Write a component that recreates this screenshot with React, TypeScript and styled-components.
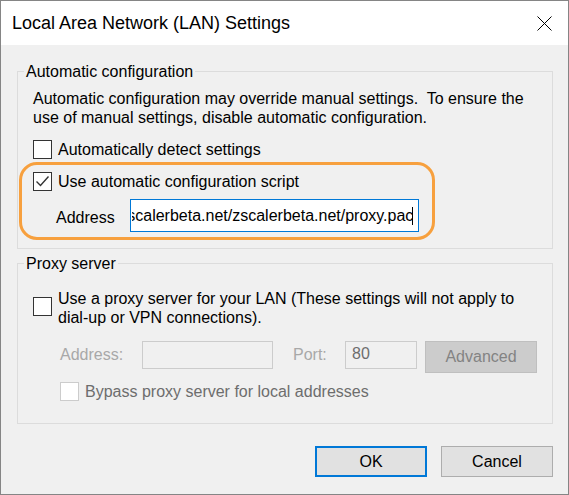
import { useEffect, useRef } from 'react';
import styled, { createGlobalStyle } from 'styled-components';

const GlobalStyle = createGlobalStyle`
  html, body {
    margin: 0;
    padding: 0;
    background: #f0f0f0;
  }

  body {
    font-family: "Segoe UI", "Liberation Sans", Arial, sans-serif;
    font-size: 16px;
    color: #000;
  }

  * {
    box-sizing: border-box;
  }
`;

const Window = styled.div`
  width: 569px;
  height: 495px;
  border: 1px solid #858585;
  background-color: #f0f0f0;
  display: flex;
  flex-direction: column;
`;

const TitleBar = styled.div`
  height: 44px;
  flex-shrink: 0;
  background-color: #fff;
  display: flex;
  align-items: center;
  justify-content: space-between;
  padding: 0 16px 0 11px;
`;

const Title = styled.span`
  font-size: 18px;
`;

const CloseIcon = styled.svg`
  width: 15px;
  height: 15px;
  display: block;
`;

const Content = styled.div`
  display: flex;
  flex-direction: column;
  padding: 0 15px 0 16px;
`;

const GroupBox = styled.section<{ $height: number; $gap: number }>`
  position: relative;
  height: ${(p) => p.$height}px;
  margin-top: ${(p) => p.$gap}px;
  border: 1px solid #dcdcdc;
  display: flex;
  flex-direction: column;
  align-items: flex-start;
`;

const GroupTitle = styled.span`
  position: absolute;
  top: -10px;
  left: 6px;
  padding: 0 2px;
  line-height: 19px;
  background-color: #f0f0f0;
`;

const Description = styled.p`
  margin: 17px 0 0 15px;
  line-height: 19px;
`;

const CheckRow = styled.label<{ $top: number; $left: number; $disabled?: boolean }>`
  display: flex;
  align-items: flex-start;
  gap: 6px;
  margin: ${(p) => p.$top}px 0 0 ${(p) => p.$left}px;
  line-height: 19px;
  color: ${(p) => (p.$disabled ? '#6d6d6d' : '#000')};
`;

const Box = styled.span<{ $disabled?: boolean; $offset?: number }>`
  width: 19px;
  height: 19px;
  flex-shrink: 0;
  margin-top: ${(p) => p.$offset ?? 0}px;
  border: 1px solid ${(p) => (p.$disabled ? '#cccccc' : '#333333')};
  background-color: #fff;
  display: flex;
  align-items: center;
  justify-content: center;
`;

const Highlight = styled.div`
  width: 416px;
  height: 78px;
  margin: 3px 0 0 1px;
  padding: 7px 0 0 11px;
  border: 3px solid #f7a03e;
  border-radius: 18px;
  display: flex;
  flex-direction: column;
  align-items: flex-start;
`;

const AddressRow = styled.div`
  display: flex;
  align-items: center;
  margin: 8px 0 0 23px;
`;

const FieldLabel = styled.span<{ $width: number; $disabled?: boolean }>`
  width: ${(p) => p.$width}px;
  padding-top: 4px;
  line-height: 19px;
  color: ${(p) => (p.$disabled ? '#a8a8a8' : '#000')};
`;

const AddressField = styled.div`
  width: 289px;
  height: 33px;
  border: 1px solid #0078d7;
  background-color: #fff;
  display: flex;
  align-items: center;
  padding: 0 5px 0 1px;
`;

const AddressInput = styled.input`
  flex: 1;
  min-width: 0;
  height: 100%;
  border: none;
  outline: none;
  padding: 0;
  background: transparent;
  font: inherit;
  color: #000;
`;

const Caret = styled.span`
  width: 1px;
  height: 18px;
  margin-left: -1px;
  background-color: #000;
  flex-shrink: 0;
`;

const DisabledRow = styled.div`
  display: flex;
  align-items: flex-start;
  margin: 14px 0 0 42px;
`;

const DisabledInput = styled.div<{ $width: number; $gapAfter?: number }>`
  width: ${(p) => p.$width}px;
  height: 28px;
  margin-right: ${(p) => p.$gapAfter ?? 0}px;
  border: 1px solid #cccccc;
  padding: 0 0 3px 6px;
  display: flex;
  align-items: center;
  color: #6d6d6d;
`;

const DisabledButton = styled.div`
  width: 112px;
  height: 32px;
  border: 1px solid #bfbfbf;
  background-color: #cccccc;
  color: #838383;
  display: flex;
  align-items: center;
  justify-content: center;
`;

const Footer = styled.div`
  display: flex;
  justify-content: flex-end;
  gap: 14px;
  margin-top: 22px;
`;

const DialogButton = styled.button<{ $default?: boolean }>`
  width: 112px;
  height: 31px;
  padding: 0;
  font: inherit;
  color: #000;
  background-color: #e1e1e1;
  border: ${(p) => (p.$default ? '2px solid #0078d7' : '1px solid #adadad')};
  cursor: pointer;
`;

const CheckMark = () => (
  <svg width="17" height="17" viewBox="0 0 17 17">
    <polyline points="2.5,8.5 6.5,12.5 14.5,3.5" fill="none" stroke="#333" strokeWidth="1.4" />
  </svg>
);

const PAC_URL = 'http://pac.zscalerbeta.net/zscalerbeta.net/proxy.pac';

export default function App() {
  const inputRef = useRef<HTMLInputElement>(null);

  // the field is scrolled to its end, as after typing the address
  useEffect(() => {
    const el = inputRef.current;
    if (el) el.scrollLeft = el.scrollWidth;
  }, []);

  return (
    <>
      <GlobalStyle />
      <Window>
        <TitleBar>
          <Title>Local Area Network (LAN) Settings</Title>
          <CloseIcon viewBox="0 0 15 15">
            <path d="M0.5 0.5 L14.5 14.5 M14.5 0.5 L0.5 14.5" stroke="#000" strokeWidth="1" />
          </CloseIcon>
        </TitleBar>

        <Content>
          <GroupBox $height={178} $gap={26}>
            <GroupTitle>Automatic configuration</GroupTitle>
            <Description>
              Automatic configuration may override manual settings.&nbsp; To ensure the
              <br />
              use of manual settings, disable automatic configuration.
            </Description>
            <CheckRow $top={13} $left={15}>
              <Box />
              Automatically detect settings
            </CheckRow>
            <Highlight>
              <CheckRow $top={0} $left={0}>
                <Box>
                  <CheckMark />
                </Box>
                Use automatic configuration script
              </CheckRow>
              <AddressRow>
                <FieldLabel $width={74}>Address</FieldLabel>
                <AddressField>
                  <AddressInput ref={inputRef} readOnly value={PAC_URL} />
                  <Caret />
                </AddressField>
              </AddressRow>
            </Highlight>
          </GroupBox>

          <GroupBox $height={161} $gap={14}>
            <GroupTitle>Proxy server</GroupTitle>
            <CheckRow $top={25} $left={15}>
              <Box $offset={8} />
              <span>
                Use a proxy server for your LAN (These settings will not apply to
                <br />
                dial-up or VPN connections).
              </span>
            </CheckRow>
            <DisabledRow>
              <FieldLabel $width={82} $disabled>
                Address:
              </FieldLabel>
              <DisabledInput $width={131} $gapAfter={20} />
              <FieldLabel $width={52} $disabled>
                Port:
              </FieldLabel>
              <DisabledInput $width={72} $gapAfter={8}>
                80
              </DisabledInput>
              <DisabledButton>Advanced</DisabledButton>
            </DisabledRow>
            <CheckRow $top={9} $left={42} $disabled>
              <Box $disabled />
              Bypass proxy server for local addresses
            </CheckRow>
          </GroupBox>

          <Footer>
            <DialogButton $default>OK</DialogButton>
            <DialogButton>Cancel</DialogButton>
          </Footer>
        </Content>
      </Window>
    </>
  );
}
